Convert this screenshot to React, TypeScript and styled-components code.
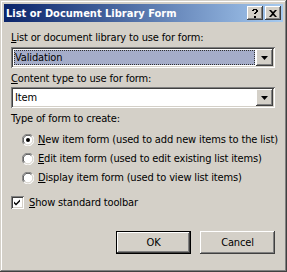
import React from 'react';
import styled, { createGlobalStyle } from 'styled-components';

const GlobalStyle = createGlobalStyle`
  html, body {
    margin: 0;
    padding: 0;
    background: #d4d0c8;
  }
  * {
    box-sizing: border-box;
  }
`;

const raised = `
  box-shadow: inset -1px -1px #404040, inset 1px 1px #ffffff, inset -2px -2px #808080, inset 2px 2px #d4d0c8;
`;

const sunken = `
  box-shadow: inset 1px 1px #808080, inset -1px -1px #ffffff, inset 2px 2px #404040, inset -2px -2px #d4d0c8;
`;

const Window = styled.div`
  width: 287px;
  height: 272px;
  padding: 4px;
  background: #d4d0c8;
  display: flex;
  flex-direction: column;
  font-family: 'DejaVu Sans Condensed', 'DejaVu Sans', sans-serif;
  font-size: 11px;
  letter-spacing: -0.15px;
  white-space: nowrap;
  color: #000;
  box-shadow: inset -1px -1px #404040, inset 1px 1px #d4d0c8, inset -2px -2px #808080, inset 2px 2px #ffffff;
`;

const TitleBar = styled.div`
  height: 18px;
  display: flex;
  align-items: center;
  padding: 0 2px 0 2px;
  background: linear-gradient(to right, #0a246a, #a6caf0);
`;

const Title = styled.div`
  flex: 1;
  color: #fff;
  font-weight: bold;
  font-size: 11px;
  letter-spacing: 0;
  line-height: 13px;
`;

const CaptionButton = styled.div`
  width: 16px;
  height: 14px;
  margin-left: 2px;
  background: #d4d0c8;
  ${raised}
  display: flex;
  align-items: center;
  justify-content: center;
`;

const Body = styled.div`
  flex: 1;
  display: flex;
  flex-direction: column;
  padding: 9px 8px 0 7px;
`;

const Label = styled.div<{ $top?: number }>`
  line-height: 13px;
  margin-top: ${(p) => p.$top ?? 0}px;
`;

const Combo = styled.div<{ $top?: number }>`
  height: 21px;
  margin-top: ${(p) => p.$top ?? 0}px;
  background: #fff;
  padding: 2px;
  display: flex;
  ${sunken}
`;

const ComboValue = styled.div<{ $selected?: boolean }>`
  flex: 1;
  margin: 1px;
  padding-left: 1px;
  line-height: 13px;
  display: flex;
  align-items: center;
  background: ${(p) => (p.$selected ? '#a5adc9' : 'transparent')};
  outline: ${(p) => (p.$selected ? '1px dotted #303030' : 'none')};
  outline-offset: -1px;
`;

const DropButton = styled.div`
  width: 17px;
  height: 17px;
  background: #d4d0c8;
  ${raised}
  display: flex;
  align-items: center;
  justify-content: center;
`;

const RadioGroup = styled.div`
  display: flex;
  flex-direction: column;
  margin-top: 5px;
  padding-left: 11px;
`;

const OptionRow = styled.label`
  display: flex;
  align-items: center;
  height: 19px;
  gap: 4px;

  svg {
    flex-shrink: 0;
  }
`;

const Key = styled.span`
  text-decoration: underline;
  text-underline-offset: 1px;
`;

const CheckRow = styled.label`
  display: flex;
  align-items: center;
  height: 15px;
  gap: 5px;
  margin-top: 8px;

  svg {
    flex-shrink: 0;
  }
`;

const Footer = styled.div`
  display: flex;
  justify-content: flex-end;
  gap: 9px;
  margin-top: 21px;
`;

const Button = styled.div<{ $default?: boolean }>`
  width: 75px;
  height: 23px;
  display: flex;
  align-items: center;
  justify-content: center;
  background: #d4d0c8;
  ${(p) =>
    p.$default
      ? 'box-shadow: inset 0 0 0 1px #000, inset -2px -2px #404040, inset 2px 2px #ffffff, inset -3px -3px #808080, inset 3px 3px #d4d0c8;'
      : 'box-shadow: inset -1px -1px #404040, inset 1px 1px #ffffff, inset -2px -2px #808080, inset 2px 2px #d4d0c8;'}
`;

const Arrow = () => (
  <svg width="7" height="4" viewBox="0 0 7 4">
    <path d="M0 0h7L3.5 4z" fill="#000" />
  </svg>
);

const Radio = ({ checked }: { checked?: boolean }) => (
  <svg width="12" height="12" viewBox="0 0 12 12">
    <circle cx="6" cy="6" r="5.5" fill="#fff" />
    <path d="M10.2 1.8A5.5 5.5 0 0 0 1.8 10.2" fill="none" stroke="#808080" strokeWidth="1" />
    <path d="M9.4 2.6A4.4 4.4 0 0 0 2.6 9.4" fill="none" stroke="#404040" strokeWidth="1" />
    <path d="M1.8 10.2A5.5 5.5 0 0 0 10.2 1.8" fill="none" stroke="#ffffff" strokeWidth="1" />
    <path d="M2.6 9.4A4.4 4.4 0 0 0 9.4 2.6" fill="none" stroke="#d4d0c8" strokeWidth="1" />
    {checked && <circle cx="6" cy="6" r="2" fill="#000" />}
  </svg>
);

const Check = () => (
  <svg width="13" height="13" viewBox="0 0 13 13">
    <rect x="0" y="0" width="13" height="13" fill="#808080" />
    <rect x="1" y="1" width="12" height="12" fill="#fff" />
    <rect x="1" y="1" width="11" height="11" fill="#404040" />
    <rect x="2" y="2" width="10" height="10" fill="#d4d0c8" />
    <rect x="2" y="2" width="9" height="9" fill="#fff" />
    <path d="M3 5.5l2 2 4-4v2l-4 4-2-2z" fill="#000" />
  </svg>
);

export default function App() {
  return (
    <>
      <GlobalStyle />
      <Window>
        <TitleBar>
          <Title>List or Document Library Form</Title>
          <CaptionButton>
            <svg width="8" height="9" viewBox="0 0 8 9">
              <path d="M1 2V1h1V0h4v1h1v2H6v1H5v1H3V4h1V3h1V1H3v1z" fill="#000" />
              <rect x="3" y="7" width="2" height="2" fill="#000" />
            </svg>
          </CaptionButton>
          <CaptionButton>
            <svg width="8" height="7" viewBox="0 0 8 7">
              <path d="M0 0h2l2 2 2-2h2L5 3.5 8 7H6L4 5 2 7H0l3-3.5z" fill="#000" />
            </svg>
          </CaptionButton>
        </TitleBar>
        <Body>
          <Label>
            <Key>L</Key>ist or document library to use for form:
          </Label>
          <Combo $top={3}>
            <ComboValue $selected>Validation</ComboValue>
            <DropButton>
              <Arrow />
            </DropButton>
          </Combo>
          <Label $top={4}>
            <Key>C</Key>ontent type to use for form:
          </Label>
          <Combo $top={2}>
            <ComboValue>Item</ComboValue>
            <DropButton>
              <Arrow />
            </DropButton>
          </Combo>
          <Label $top={4}>Type of form to create:</Label>
          <RadioGroup>
            <OptionRow>
              <Radio checked />
              <span>
                <Key>N</Key>ew item form (used to add new items to the list)
              </span>
            </OptionRow>
            <OptionRow>
              <Radio />
              <span>
                <Key>E</Key>dit item form (used to edit existing list items)
              </span>
            </OptionRow>
            <OptionRow>
              <Radio />
              <span>
                <Key>D</Key>isplay item form (used to view list items)
              </span>
            </OptionRow>
          </RadioGroup>
          <CheckRow>
            <Check />
            <span>
              <Key>S</Key>how standard toolbar
            </span>
          </CheckRow>
          <Footer>
            <Button $default>OK</Button>
            <Button>Cancel</Button>
          </Footer>
        </Body>
      </Window>
    </>
  );
}
